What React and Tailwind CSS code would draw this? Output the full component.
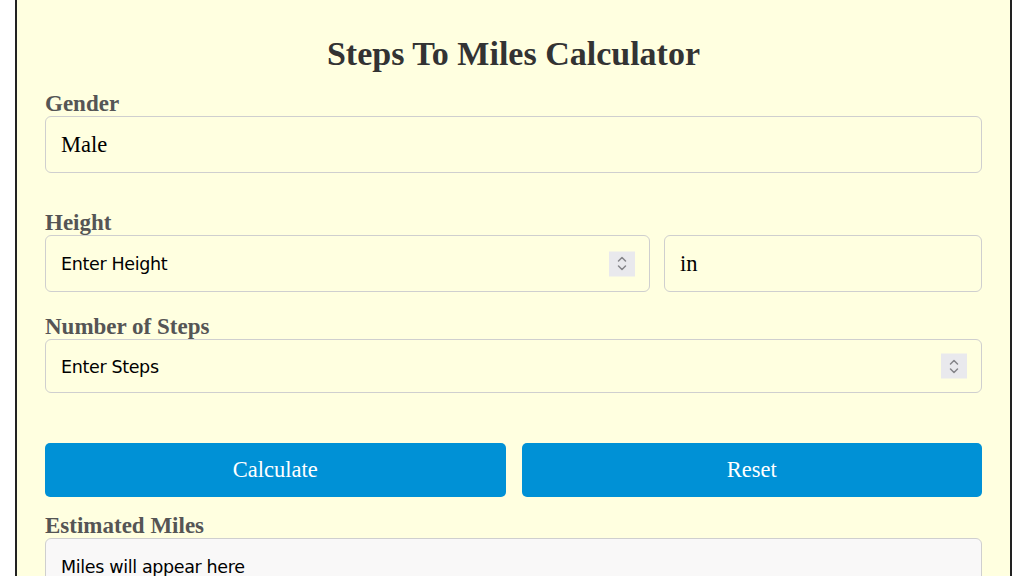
import React from 'react';

const serif = { fontFamily: '"Liberation Serif", "Times New Roman", serif' };
const sans = { fontFamily: 'Tahoma, "DejaVu Sans", Verdana, sans-serif' };

const Spinner = () => (
    <div className="absolute right-[14px] top-1/2 -translate-y-1/2 flex h-[25px] w-[26px] items-center justify-center bg-[#e9e9ed]">
        <svg width="12" height="18" viewBox="0 0 12 18" fill="none" stroke="#85858a" strokeWidth="1.5" strokeLinecap="round" strokeLinejoin="round">
            <path d="M2.5 6.5 L6 3 L9.5 6.5" />
            <path d="M2.5 11.5 L6 15 L9.5 11.5" />
        </svg>
    </div>
);

const Label = ({ children, className = '' }) => (
    <p className={`text-[23px] font-bold leading-[24px] text-[#555] ${className}`} style={serif}>
        {children}
    </p>
);

export default function App() {
    return (
        <div className="min-h-screen bg-white">
            <div className="ml-[15px] mr-[12px] border-x-2 border-b-2 border-[#222] bg-[#ffffe0] px-[28px] pt-[35px] pb-10">

                {/* TITLE */}
                <h1 className="text-center text-[34px] font-bold leading-[37px] text-[#333]" style={serif}>
                    Steps To Miles Calculator
                </h1>

                {/* GENDER */}
                <Label className="mt-[20px]">Gender</Label>
                <div className="flex h-[57px] items-center rounded-[6px] border border-[#cfcfcf] pl-[15px] text-[22.5px] text-black" style={serif}>
                    Male
                </div>

                {/* HEIGHT */}
                <Label className="mt-[38px]">Height</Label>
                <div className="flex gap-[14px]">
                    <div className="relative flex h-[57px] flex-1 items-center rounded-[6px] border border-[#cfcfcf] pl-[15px] pt-[2px] text-[17.5px] tracking-[-0.35px] text-black" style={sans}>
                        Enter Height
                        <Spinner />
                    </div>
                    <div className="flex h-[57px] w-[318px] items-center rounded-[6px] border border-[#cfcfcf] pl-[15px] text-[22.5px] text-black" style={serif}>
                        in
                    </div>
                </div>

                {/* STEPS */}
                <Label className="mt-[23px]">Number of Steps</Label>
                <div className="relative flex h-[54px] items-center rounded-[6px] border border-[#cfcfcf] pl-[15px] pt-[2px] text-[17.5px] tracking-[-0.35px] text-black" style={sans}>
                    Enter Steps
                    <Spinner />
                </div>

                {/* BUTTONS */}
                <div className="mt-[50px] flex gap-[16px]">
                    <button className="h-[54px] flex-1 rounded-[5px] bg-[#0091d6] text-[22.5px] text-white" style={serif}>
                        Calculate
                    </button>
                    <button className="h-[54px] flex-1 rounded-[5px] bg-[#0091d6] text-[22.5px] text-white" style={serif}>
                        Reset
                    </button>
                </div>

                {/* RESULT */}
                <Label className="mt-[17px]">Estimated Miles</Label>
                <div className="flex h-[57px] items-start rounded-[6px] border border-[#cfcfcf] bg-[#f9f8f8] pl-[15px] pt-[17px] text-[17.5px] leading-[22px] tracking-[-0.35px] text-black" style={sans}>
                    Miles will appear here
                </div>
            </div>
        </div>
    );
}
